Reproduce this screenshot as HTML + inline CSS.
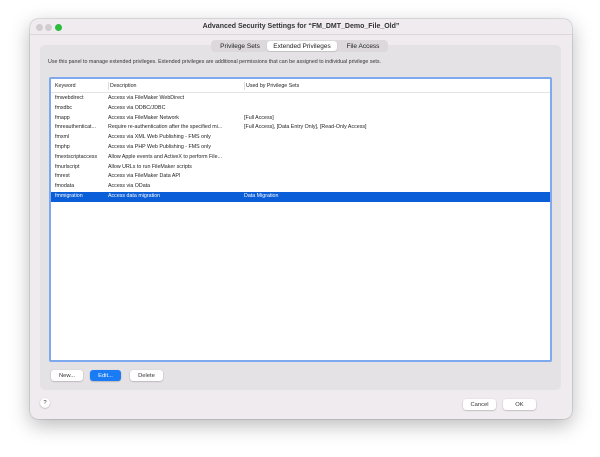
<!DOCTYPE html>
<html><head><style>
*{margin:0;padding:0;box-sizing:border-box}
body{width:600px;height:457px;background:#fff;position:relative;overflow:hidden;font-family:"Liberation Sans",sans-serif;color:#222}
.win{position:absolute;left:30px;top:19px;width:542px;height:400px;background:#efebee;border-radius:8px;box-shadow:0 6px 20px rgba(0,0,0,.28),0 0 0 .5px rgba(0,0,0,.2)}
.title{position:absolute;left:0;top:0;width:100%;height:16px;text-align:center;font-size:7px;font-weight:bold;line-height:16px;color:#333;border-bottom:1px solid #ddd7db}
.dot{position:absolute;top:5px;width:7px;height:7px;border-radius:50%;background:#d1ccd0}
.panel{position:absolute;left:10px;top:26px;width:521px;height:345px;background:#e5e2e5;border-radius:5px}
.tabs{position:absolute;left:181px;top:21px;width:177px;height:12px;background:#dcd8dc;border-radius:4px;font-size:6.5px;z-index:2}
.tabs span{position:absolute;top:0;height:12px;display:flex;align-items:center;justify-content:center}
.sel{background:#fff;border-radius:3px;height:10px!important;top:1px!important;box-shadow:0 .5px 1px rgba(0,0,0,.2)}
.desc{position:absolute;left:18px;top:40px;font-size:5.3px;color:#333}
.tbl{position:absolute;left:19px;top:58px;width:503px;height:285px;background:#fff;border:2px solid #7fa9ee;border-radius:2px}
.hd{position:absolute;left:0;top:0;width:100%;height:14px;border-bottom:1px solid #e4e4e4;font-size:5.3px;line-height:14px}
.row{position:absolute;left:0;width:100%;height:9.8px;font-size:5.3px;line-height:9.8px}
.row span,.hd span{position:absolute;top:0;white-space:nowrap}
.c1{left:4px}.c2{left:57px}.c3{left:193px}
.hd .c2,.hd .c3{border-left:1px solid #ddd;padding-left:1px;top:3px!important;line-height:8px}
.row.s{background:#0a5ed7;color:#fff}
.btn{position:absolute;height:11px;background:#fff;border-radius:3px;box-shadow:0 .5px 1.5px rgba(0,0,0,.3);font-size:5.8px;display:flex;align-items:center;justify-content:center;color:#333}
.blue{background:#1a7cf5;color:#fff}
</style></head><body>
<div class="win">
<div class="title">Advanced Security Settings for “FM_DMT_Demo_File_Old”</div>
<div class="dot" style="left:6px"></div><div class="dot" style="left:15px"></div><div class="dot" style="left:25px;background:#2cbb3d"></div>
<div class="panel"></div>
<div class="tabs"><span style="left:6px;width:46px">Privilege Sets</span><span class="sel" style="left:56px;width:70px">Extended Privileges</span><span style="left:130px;width:44px">File Access</span></div>
<div class="desc">Use this panel to manage extended privileges. Extended privileges are additional permissions that can be assigned to individual privilege sets.</div>
<div class="tbl">
<div class="hd"><span class="c1">Keyword</span><span class="c2">Description</span><span class="c3">Used by Privilege Sets</span></div>
<div class="row" style="top:15px"><span class="c1">fmwebdirect</span><span class="c2">Access via FileMaker WebDirect</span></div>
<div class="row" style="top:24.8px"><span class="c1">fmxdbc</span><span class="c2">Access via ODBC/JDBC</span></div>
<div class="row" style="top:34.6px"><span class="c1">fmapp</span><span class="c2">Access via FileMaker Network</span><span class="c3">[Full Access]</span></div>
<div class="row" style="top:44.4px"><span class="c1">fmreauthenticat...</span><span class="c2">Require re-authentication after the specified mi...</span><span class="c3">[Full Access], [Data Entry Only], [Read-Only Access]</span></div>
<div class="row" style="top:54.2px"><span class="c1">fmxml</span><span class="c2">Access via XML Web Publishing - FMS only</span></div>
<div class="row" style="top:64px"><span class="c1">fmphp</span><span class="c2">Access via PHP Web Publishing - FMS only</span></div>
<div class="row" style="top:73.8px"><span class="c1">fmextscriptaccess</span><span class="c2">Allow Apple events and ActiveX to perform File...</span></div>
<div class="row" style="top:83.6px"><span class="c1">fmurlscript</span><span class="c2">Allow URLs to run FileMaker scripts</span></div>
<div class="row" style="top:93.4px"><span class="c1">fmrest</span><span class="c2">Access via FileMaker Data API</span></div>
<div class="row" style="top:103.2px"><span class="c1">fmodata</span><span class="c2">Access via OData</span></div>
<div class="row s" style="top:113px"><span class="c1">fmmigration</span><span class="c2">Access data migration</span><span class="c3">Data Migration</span></div>
</div>
<div class="btn" style="left:21px;top:351px;width:32px">New...</div>
<div class="btn blue" style="left:60px;top:351px;width:31px">Edit...</div>
<div class="btn" style="left:100px;top:351px;width:33px">Delete</div>
<div class="btn" style="left:10px;top:379px;width:10px;height:10px;border-radius:50%">?</div>
<div class="btn" style="left:433px;top:380px;width:33px">Cancel</div>
<div class="btn" style="left:473px;top:380px;width:33px">OK</div>
</div>
</body></html>
